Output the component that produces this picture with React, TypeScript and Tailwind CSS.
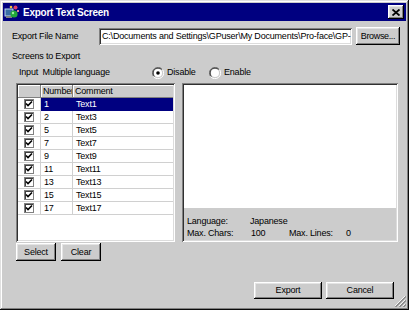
import React from "react";

const rows: [string, string][] = [
  ["1", "Text1"],
  ["2", "Text3"],
  ["5", "Text5"],
  ["7", "Text7"],
  ["9", "Text9"],
  ["11", "Text11"],
  ["13", "Text13"],
  ["15", "Text15"],
  ["17", "Text17"],
];

const raised =
  "shadow-[inset_-1px_-1px_#000,inset_1px_1px_#fff,inset_-2px_-2px_#808080,inset_2px_2px_#e4e4e4]";
const sunken =
  "shadow-[inset_1px_1px_#808080,inset_-1px_-1px_#fff,inset_2px_2px_#303030,inset_-2px_-2px_#dcdcdc]";

function Check() {
  return (
    <div className="w-[10px] h-[10px] bg-white border border-[#808080] shadow-[inset_1px_1px_#404040] flex items-center justify-center">
      <svg width="8" height="8" viewBox="0 0 8 8">
        <path d="M1 3.5 L3 5.5 L7 1.5" stroke="#000" strokeWidth="1.6" fill="none" />
      </svg>
    </div>
  );
}

function Radio({ on }: { on: boolean }) {
  return (
    <svg width="12" height="12" viewBox="0 0 12 12">
      <path d="M10.5 2.5 A5.5 5.5 0 0 0 1.5 9.5" stroke="#808080" strokeWidth="1" fill="none" />
      <path d="M9.5 2.5 A4.5 4.5 0 0 0 2.5 9.5" stroke="#303030" strokeWidth="1" fill="none" />
      <path d="M1.5 9.5 A5.5 5.5 0 0 0 10.5 2.5" stroke="#fff" strokeWidth="1" fill="none" />
      <circle cx="6" cy="6" r="4" fill="#fff" />
      {on && <circle cx="6" cy="6" r="1.8" fill="#000" />}
    </svg>
  );
}

export default function App() {
  return (
    <div className="w-[409px] h-[310px] bg-[#cccccc] p-[3px] relative font-['Liberation_Sans',Arial,sans-serif] text-[9px] tracking-[-0.2px] leading-[13px] text-black shadow-[inset_-1px_-1px_#0a0a0a,inset_1px_1px_#e0e0e0,inset_-2px_-2px_#808080,inset_2px_2px_#fff] overflow-hidden">
      {/* Title bar */}
      <div className="h-[18px] bg-[#000080] flex items-center pl-[1px] pr-[2px]">
        <svg width="16" height="16" viewBox="0 0 16 16">
          <rect x="1" y="5" width="8" height="7" fill="#3a6ea5" stroke="#c0d8f0" strokeWidth="1" />
          <rect x="2" y="12" width="6" height="2" fill="#808080" />
          <circle cx="10" cy="10" r="3.6" fill="#22a83a" />
          <circle cx="9" cy="9" r="1.2" fill="#9cf0a0" />
          <circle cx="11.5" cy="3.5" r="2" fill="#e0406a" />
          <circle cx="7" cy="3" r="1.3" fill="#f0c040" />
          <rect x="13" y="6" width="2" height="2" fill="#e080a0" />
        </svg>
        <span className="ml-[3px] text-white font-bold text-[10px] tracking-[-0.25px]">Export Text Screen</span>
        <div className="flex-1" />
        <div className={`w-[16px] h-[14px] bg-[#cccccc] ${raised} flex items-center justify-center`}>
          <svg width="8" height="7" viewBox="0 0 8 7">
            <path d="M0.5 0.5 L7.5 6.5 M7.5 0.5 L0.5 6.5" stroke="#000" strokeWidth="1.8" />
          </svg>
        </div>
      </div>

      {/* Body */}
      <div className="pl-[9px] flex flex-col">
        {/* File name row */}
        <div className="mt-[6px] flex items-center h-[18px]">
          <div className="w-[87px]">Export File Name</div>
          <div className={`w-[253px] h-[17px] bg-white ${sunken} pl-[3px] pr-[2px] flex items-center overflow-hidden whitespace-nowrap`}>
            C:\Documents and Settings\GPuser\My Documents\Pro-face\GP-
          </div>
          <div className={`ml-[4px] w-[44px] h-[18px] ${raised} flex items-center justify-center tracking-[-0.35px]`}>
            Browse...
          </div>
        </div>

        <div className="mt-[5px] h-[13px]">Screens to Export</div>

        <div className="mt-[3px] h-[13px] flex items-center">
          <div className="ml-[7px] w-[133px] whitespace-pre">Input  Multiple language</div>
          <Radio on={true} />
          <span className="ml-[3px] w-[42px]">Disable</span>
          <Radio on={false} />
          <span className="ml-[3px]">Enable</span>
        </div>

        {/* Grid + panel */}
        <div className="mt-[4px] flex">
          <div className={`ml-[4px] w-[159px] h-[159px] bg-white p-[2px] ${sunken}`}>
            <div className="flex h-[13px] bg-[#cccccc]">
              <div className="w-[23px] h-full border-r border-b border-[#808080] shadow-[inset_1px_1px_#fff]" />
              <div className="w-[32px] h-full border-r border-b border-[#808080] shadow-[inset_1px_1px_#fff] pl-[2px] overflow-hidden whitespace-nowrap leading-[12px]">
                Number
              </div>
              <div className="flex-1 h-full border-b border-[#808080] shadow-[inset_1px_1px_#fff] pl-[2px] leading-[12px]">
                Comment
              </div>
            </div>
            {rows.map(([n, t], i) => {
              const sel = i === 0;
              return (
                <div key={n} className="flex h-[13px]">
                  <div className="w-[23px] h-full border-r border-b border-[#d0d0d0] flex items-center justify-center">
                    <Check />
                  </div>
                  <div
                    className={`w-[32px] h-full border-b pl-[3px] leading-[12px] ${
                      sel ? "bg-[#000080] text-white border-[#000080]" : "border-r border-[#d0d0d0]"
                    }`}
                  >
                    {n}
                  </div>
                  <div
                    className={`flex-1 h-full border-b pl-[3px] leading-[12px] ${
                      sel ? "bg-[#000080] text-white border-[#000080]" : "border-[#d0d0d0]"
                    }`}
                  >
                    {t}
                  </div>
                </div>
              );
            })}
          </div>

          <div className={`ml-[7px] w-[216px] h-[159px] p-[2px] flex flex-col ${sunken}`}>
            <div className="h-[123px] bg-white" />
            <div className="pl-[3px] pt-[7px] flex flex-col leading-[12px]">
              <div className="flex">
                <span className="w-[63px]">Language:</span>
                <span>Japanese</span>
              </div>
              <div className="flex">
                <span className="w-[64px]">Max. Chars:</span>
                <span className="w-[38px]">100</span>
                <span className="w-[57px]">Max. Lines:</span>
                <span>0</span>
              </div>
            </div>
          </div>
        </div>

        {/* Select / Clear */}
        <div className="mt-[1px] flex">
          <div className={`ml-[4px] w-[40px] h-[18px] ${raised} flex items-center justify-center`}>Select</div>
          <div className={`ml-[5px] w-[40px] h-[18px] ${raised} flex items-center justify-center`}>Clear</div>
        </div>

        {/* Export / Cancel */}
        <div className="mt-[21px] flex">
          <div className={`ml-[242px] w-[68px] h-[17px] ${raised} flex items-center justify-center`}>Export</div>
          <div className={`ml-[4px] w-[68px] h-[17px] ${raised} flex items-center justify-center`}>Cancel</div>
        </div>
      </div>

      {/* Resize grip */}
      <svg className="absolute right-[3px] bottom-[3px]" width="12" height="12" viewBox="0 0 12 12">
        <path d="M11 1 L1 11 M11 5 L5 11 M11 9 L9 11" stroke="#fff" strokeWidth="1" />
        <path d="M12 1.5 L1.5 12 M12 5.5 L5.5 12 M12 9.5 L9.5 12" stroke="#808080" strokeWidth="1.2" />
      </svg>
    </div>
  );
}
